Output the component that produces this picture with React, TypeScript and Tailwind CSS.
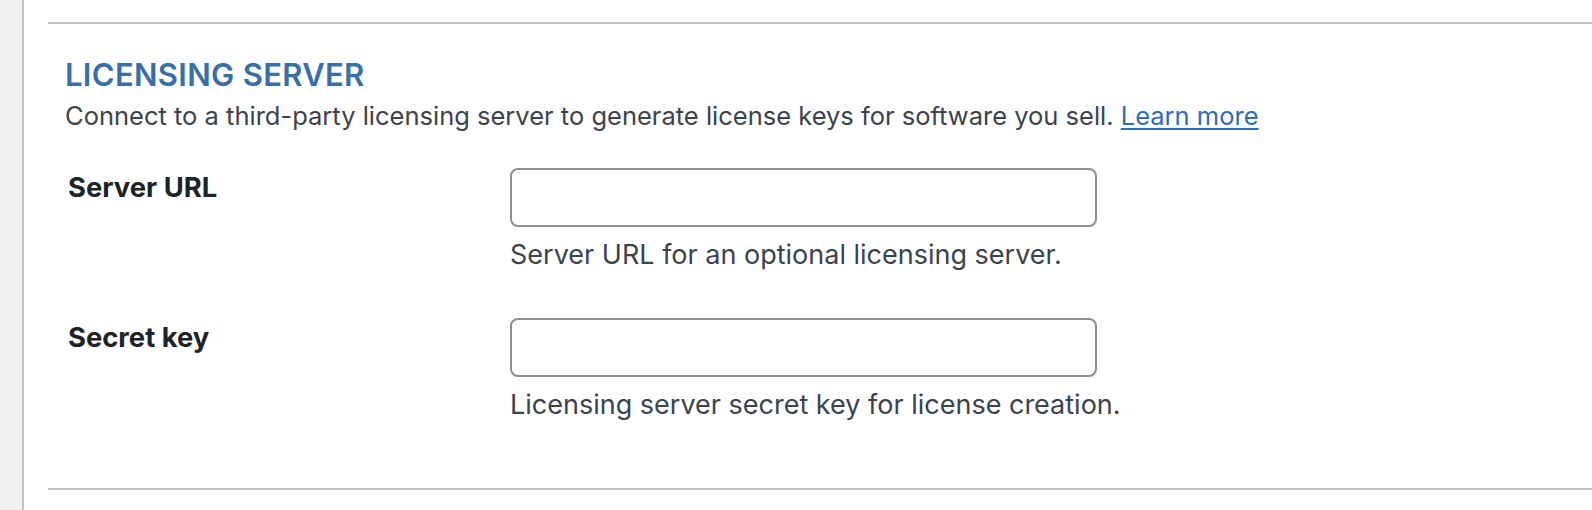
import React from 'react';

const font = { fontFamily: 'Inter, "Liberation Sans", sans-serif' };

function Field({ label, help }: { label: string; help: string }) {
  return (
    <div className="flex">
      <div className="w-[445px] shrink-0 pl-[3px] text-[27.4px] leading-[1.42] font-bold text-[#1d2327]">
        {label}
      </div>
      <div>
        <input
          type="text"
          className="block w-[587px] h-[59px] rounded-[8px] border-2 border-[#8c8f94] bg-white outline-none"
        />
        <p className="mt-[8px] text-[27px] leading-[1.5] text-[#3c434a]">{help}</p>
      </div>
    </div>
  );
}

export default function App() {
  return (
    <div className="flex min-h-[510px] bg-white" style={font}>
      <div className="w-[24px] shrink-0 bg-[#f0f0f1] border-r-2 border-[#c3c4c7]" />
      <div className="flex-1 pl-[24px] pt-[22px]">
        <div className="border-t-2 border-[#c3c4c7]" />
        <div className="pl-[17px]">
          <h2 className="mt-[32px] text-[31px] leading-[1.2] font-semibold tracking-[0.01em] text-[#3a6ea5]">
            LICENSING SERVER
          </h2>
          <p className="mt-[4px] text-[25.5px] leading-[1.5] text-[#3c434a]">
            Connect to a third-party licensing server to generate license keys for software you sell.{' '}
            <a href="#" className="text-[#2f6cb0] underline underline-offset-[3px]">
              Learn more
            </a>
          </p>
          <div className="mt-[33px] flex flex-col gap-[42px]">
            <Field label="Server URL" help="Server URL for an optional licensing server." />
            <Field label="Secret key" help="Licensing server secret key for license creation." />
          </div>
        </div>
        <div className="mt-[63px] border-t-2 border-[#c3c4c7]" />
      </div>
    </div>
  );
}
